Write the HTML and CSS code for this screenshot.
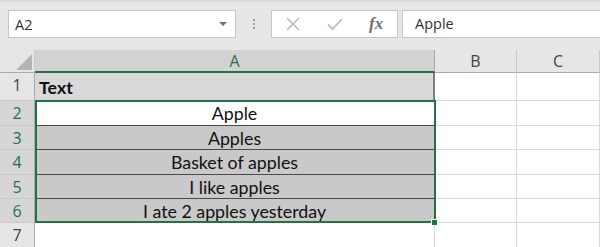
FILE: index.html
```html
<!doctype html>
<html>
<head>
    <meta charset="utf-8">
    <title>Sheet</title>
    <link rel="stylesheet" href="styles.css">
</head>
<body>
    <div class="toolbar">
        <div class="namebox">
            <span>A2</span>
            <span class="caret"></span>
        </div>
        <div class="grip"><i></i><i></i><i></i></div>
        <div class="fxbox">
            <svg class="ico" width="16" height="16" viewBox="0 0 16 16">
                <path d="M2 2 L14 14 M14 2 L2 14" stroke="#bcbcbc" stroke-width="1.6" fill="none"/>
            </svg>
            <svg class="ico" width="18" height="16" viewBox="0 0 18 16">
                <path d="M2 8.5 L6.5 13 L16 3" stroke="#bcbcbc" stroke-width="1.8" fill="none"/>
            </svg>
            <span class="fx">fx</span>
        </div>
        <div class="formula">Apple</div>
    </div>

    <div class="sheet">
        <div class="corner"><span class="tri"></span></div>
        <div class="colhead active">A</div>
        <div class="colhead">B</div>
        <div class="colhead">C</div>

        <div class="rowhead">1</div>
        <div class="cell title">Text</div>
        <div class="cell"></div>
        <div class="cell"></div>

        <div class="rowhead sel">2</div>
        <div class="cell val first">Apple</div>
        <div class="cell"></div>
        <div class="cell"></div>

        <div class="rowhead sel">3</div>
        <div class="cell val fill">Apples</div>
        <div class="cell"></div>
        <div class="cell"></div>

        <div class="rowhead sel">4</div>
        <div class="cell val fill">Basket of apples</div>
        <div class="cell"></div>
        <div class="cell"></div>

        <div class="rowhead sel">5</div>
        <div class="cell val fill">I like apples</div>
        <div class="cell"></div>
        <div class="cell"></div>

        <div class="rowhead sel">6</div>
        <div class="cell val fill">I ate 2 apples yesterday</div>
        <div class="cell"></div>
        <div class="cell"></div>

        <div class="rowhead">7</div>
        <div class="cell"></div>
        <div class="cell"></div>
        <div class="cell"></div>

        <div class="selection"></div>
        <div class="handle"></div>
    </div>
</body>
</html>
```

FILE: styles.css
```css
body {
    margin: 0;
    background-color: #fff;
    font-family: "Open Sans", "Noto Sans", sans-serif;
    overflow: hidden;
}
.toolbar {
    height: 50px;
    box-sizing: border-box;
    background-color: #e6e6e6;
    border-top: 2px solid #dadada;
    display: flex;
    align-items: flex-start;
    padding-top: 8px;
}
.namebox {
    margin-left: 8px;
    width: 228px;
    height: 28px;
    box-sizing: border-box;
    background-color: #fff;
    border: 1px solid #c6c6c6;
    display: flex;
    align-items: center;
    justify-content: space-between;
    padding: 0 8px 0 6px;
    font-size: 14.5px;
    color: #333;
}
.caret {
    width: 0;
    height: 0;
    border-left: 4px solid transparent;
    border-right: 4px solid transparent;
    border-top: 4px solid #707070;
}
.grip {
    width: 35px;
    height: 28px;
    display: flex;
    flex-direction: column;
    align-items: center;
    justify-content: center;
    gap: 2px;
}
.grip i {
    width: 2px;
    height: 2px;
    background-color: #9a9a9a;
}
.fxbox {
    width: 127px;
    height: 28px;
    box-sizing: border-box;
    background-color: #fff;
    border: 1px solid #c6c6c6;
    display: flex;
    align-items: center;
    padding-left: 13px;
}
.ico {
    margin-right: 25px;
}
.fx {
    font-family: "Liberation Serif", serif;
    font-style: italic;
    font-weight: bold;
    font-size: 17px;
    color: #707070;
    letter-spacing: 0;
}
.formula {
    flex: 1;
    margin-left: 4px;
    height: 28px;
    box-sizing: border-box;
    background-color: #fff;
    border: 1px solid #c6c6c6;
    border-right: none;
    padding-left: 12px;
    font-size: 14.5px;
    line-height: 26px;
    color: #333;
}
.sheet {
    position: relative;
    display: grid;
    grid-template-columns: 35px 400px 82px 1fr;
    grid-template-rows: 23px 28px 25px 24px 25px 24px 24px 25px;
}
.sheet > div {
    box-sizing: border-box;
}
.corner {
    background-color: #e6e6e6;
    border-right: 1px solid #c8c8c8;
    border-bottom: 1px solid #ababab;
    position: relative;
}
.tri {
    position: absolute;
    right: 2px;
    bottom: 2px;
    width: 0;
    height: 0;
    border-left: 16px solid transparent;
    border-bottom: 16px solid #b4b4b4;
}
.colhead {
    background-color: #e6e6e6;
    border-right: 1px solid #c8c8c8;
    border-bottom: 1px solid #ababab;
    text-align: center;
    font-size: 16px;
    line-height: 22px;
    color: #444;
}
.colhead.active {
    background-color: #d2d2d2;
    border-right-color: #ababab;
    border-bottom: 2px solid #217346;
    color: #217346;
}
.rowhead {
    background-color: #e6e6e6;
    border-right: 1px solid #ababab;
    border-bottom: 1px solid #c8c8c8;
    text-align: center;
    font-size: 16px;
    line-height: 25px;
    color: #444;
}
.rowhead.sel {
    background-color: #d6d6d6;
    color: #217346;
}
.cell {
    border-right: 1px solid #dadada;
    border-bottom: 1px solid #dadada;
    font-family: Lato, "Liberation Sans", sans-serif;
    font-size: 17.8px;
    color: #111;
}
.title {
    background-color: #d9d9d9;
    border-right: 2px solid #7f7f7f;
    font-weight: bold;
    padding-left: 4px;
    line-height: 28px;
}
.val {
    text-align: center;
    line-height: 25px;
    border-bottom: 1px solid #4a4a4a;
}
.fill {
    background-color: #c9c9c9;
}
.selection {
    position: absolute;
    left: 35px;
    top: 50px;
    width: 401px;
    height: 123px;
    border: 2px solid #217346;
    box-sizing: border-box;
}
.handle {
    position: absolute;
    left: 431px;
    top: 169px;
    width: 7px;
    height: 7px;
    background-color: #217346;
    border: 1px solid #fff;
}
```
